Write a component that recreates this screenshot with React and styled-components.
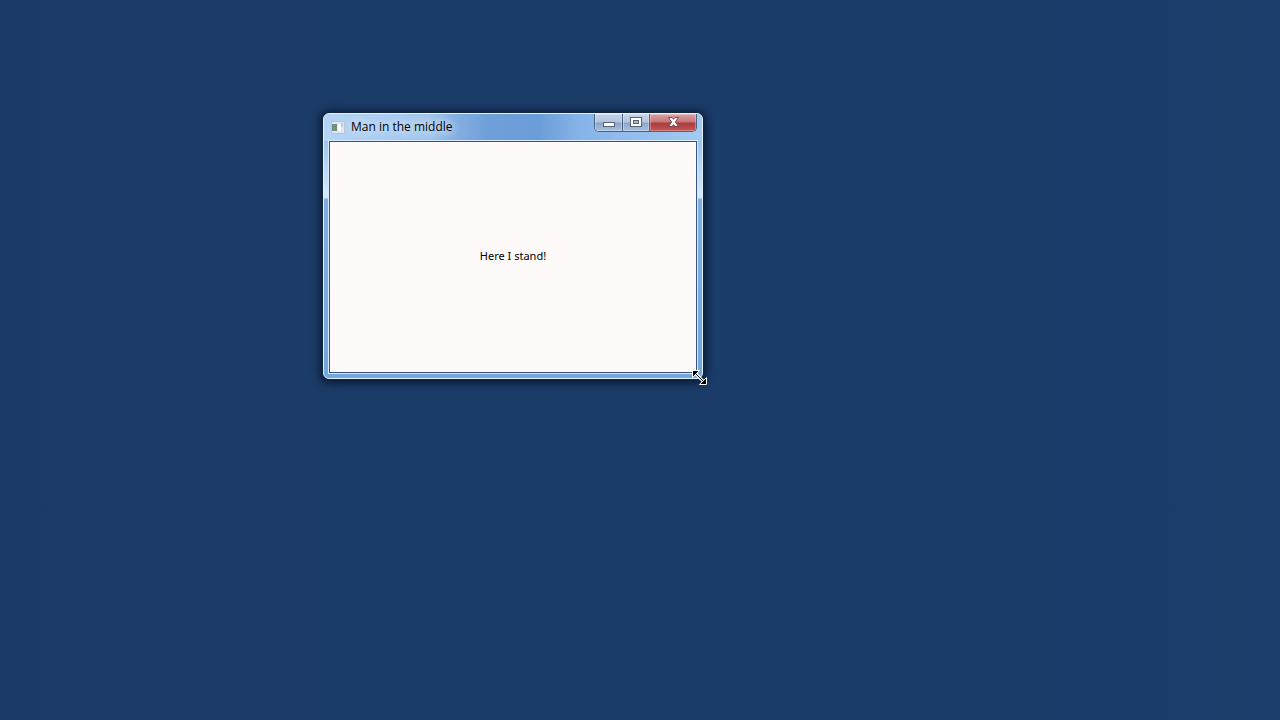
import styled, { createGlobalStyle } from "styled-components";

const GlobalStyle = createGlobalStyle`
    body {
        margin: 0;
        background-color: #1b3c68;
        font-family: "Noto Sans", "Open Sans", sans-serif;
        color: #000;
    }
`

const Desktop = styled.div`
    position: relative;
    min-height: 100vh;
    overflow: hidden;
    background: linear-gradient(90deg, #1b3b66 0%, #1b3c68 55%, #1b3d6b 100%);
`

const WindowFrame = styled.section`
    position: absolute;
    left: 323px;
    top: 113px;
    box-sizing: border-box;
    width: 380px;
    height: 266px;
    display: flex;
    flex-direction: column;
    padding: 0 5px 5px;
    border: 1px solid #e2f1ff;
    border-radius: 6px;
    background: linear-gradient(180deg, #8fbaea 0, #9cc5f0 28px, #d3e7fb 78px, #d3e7fb 84px, #80aee2 85px, #75a7dc 100%);
    box-shadow: 0 0 0 1px #10263f, 0 1px 9px 3px rgba(3, 14, 34, 0.75);
`

const TitleBar = styled.header`
    display: flex;
    align-items: flex-start;
    height: 27px;
    margin: 0 -5px;
    padding: 0 5px 0 7px;
    border-radius: 5px 5px 0 0;
    background: linear-gradient(90deg, #b5d4f5 0, #aacbf0 70px, #a3c6ee 105px, #82ade0 135px, #6f9fd9 165px, #6b9dd8 215px, #86b4e8 255px, #a5caf2 100%);
`

const AppIcon = styled.svg`
    flex: none;
    margin-top: 7px;
`

const Title = styled.h1`
    flex: 1;
    margin: 0 0 0 6px;
    font-family: "Open Sans", "Noto Sans", sans-serif;
    font-size: 12px;
    font-weight: 400;
    line-height: 26px;
    white-space: nowrap;
    text-shadow: 0 0 8px #e6f2ff, 0 0 10px #d5e8fc;
`

const Controls = styled.div`
    display: flex;
    box-sizing: border-box;
    height: 18px;
    border: 1px solid #4a6280;
    border-top: 0;
    border-radius: 0 0 5px 5px;
    overflow: hidden;
`

const ControlButton = styled.button`
    display: flex;
    align-items: center;
    justify-content: center;
    box-sizing: border-box;
    width: ${({ $close }) => ($close ? "47px" : "27px")};
    height: 17px;
    padding: ${({ $close }) => ($close ? "0 0 1px 1px" : "0 1px 1px 0")};
    border: 0;
    border-left: ${({ $first }) => ($first ? "0" : "1px solid #4a6280")};
    background: ${({ $close }) =>
        $close
            ? "linear-gradient(180deg, #d9a4a6 0, #c57676 48%, #ac3b3d 52%, #c25656 100%)"
            : "linear-gradient(180deg, #c3d3e8 0, #b2c5de 48%, #8ca5c7 52%, #a9c1e0 100%)"};
    box-shadow: inset 0 0 0 1px rgba(255, 255, 255, 0.3);
`

const Client = styled.main`
    flex: 1;
    display: flex;
    align-items: center;
    justify-content: center;
    padding-bottom: 2px;
    border: 1px solid #34557f;
    background-color: #fffafa;
    box-shadow: 0 0 0 1px #d4e9fd;
`

const Message = styled.p`
    margin: 0;
    font-size: 11px;
    line-height: 16px;
`

const ResizeCursor = styled.svg`
    position: absolute;
    right: -5px;
    bottom: -7px;
`

const App = () => {

    return(
        <>
            <GlobalStyle />
            <Desktop>
                <WindowFrame>
                    <TitleBar>
                        <AppIcon width="14" height="13" viewBox="0 0 14 13" aria-hidden="true">
                            <rect x="0.5" y="0.5" width="13" height="12" fill="#dfe8ef" stroke="#b4c7d8" />
                            <rect x="1" y="3" width="5" height="7" fill="#72907f" />
                            <rect x="7" y="3" width="3" height="7" fill="#fff" />
                            <rect x="10" y="2" width="2" height="4" fill="#bdcbd2" />
                        </AppIcon>
                        <Title>Man in the middle</Title>
                        <Controls>
                            <ControlButton type="button" aria-label="Minimize" $first>
                                <svg width="13" height="12" viewBox="0 0 13 12">
                                    <rect x="1.5" y="6.5" width="11" height="4" fill="#fff" stroke="#56657c" />
                                </svg>
                            </ControlButton>
                            <ControlButton type="button" aria-label="Maximize">
                                <svg width="13" height="12" viewBox="0 0 13 12">
                                    <rect x="1.5" y="1.5" width="11" height="9" fill="#fff" stroke="#56657c" />
                                    <rect x="4.5" y="4.5" width="5" height="3" fill="#a5b9d2" stroke="#56657c" />
                                </svg>
                            </ControlButton>
                            <ControlButton type="button" aria-label="Close" $close>
                                <svg width="13" height="12" viewBox="0 0 13 12">
                                    <path d="M1.5 1.5h3.4l1.6 1.8 1.6-1.8h3.4L8.4 6l3.1 4.5H8.1L6.5 8.7l-1.6 1.8H1.5L4.6 6z" fill="#fff" stroke="#75474d" strokeLinejoin="round" />
                                </svg>
                            </ControlButton>
                        </Controls>
                    </TitleBar>
                    <Client>
                        <Message>Here I stand!</Message>
                    </Client>
                    <ResizeCursor width="16" height="16" viewBox="0 0 16 16" aria-hidden="true">
                        <path d="M4 4l9 9" stroke="#fff" strokeWidth="3" />
                        <path d="M1.5 1.5h7l-7 7zM15.5 15.5h-7l7-7z" fill="#000" stroke="#fff" />
                        <path d="M3 3l11 11" stroke="#000" strokeWidth="1" />
                    </ResizeCursor>
                </WindowFrame>
            </Desktop>
        </>
    )
}

export default App;
